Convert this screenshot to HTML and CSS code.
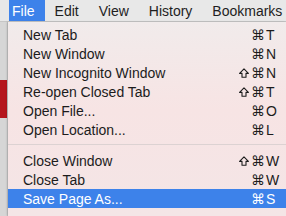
FILE: index.html
```html
<!DOCTYPE html>
<html>
<head>
    <title>File menu</title>
    <link rel="stylesheet" href="styles.css">
</head>
<body>
    <div class="menubar">
        <span class="menubar-item active">File</span>
        <span class="menubar-item">Edit</span>
        <span class="menubar-item">View</span>
        <span class="menubar-item">History</span>
        <span class="menubar-item">Bookmarks</span>
    </div>
    <div class="stage">
        <!-- sliver of the window behind the menu -->
        <div class="window-edge">
            <div class="window-red"></div>
        </div>
        <div class="menu">
            <div class="menu-item"><span>New Tab</span><span class="shortcut"><span class="cmd">⌘</span><span class="key">T</span></span></div>
            <div class="menu-item"><span>New Window</span><span class="shortcut"><span class="cmd">⌘</span><span class="key">N</span></span></div>
            <div class="menu-item"><span>New Incognito Window</span><span class="shortcut"><svg class="shift" viewBox="0 0 10 10"><path d="M5 0.9 L9.4 5.4 H7 V9.3 H3 V5.4 H0.6 Z"/></svg><span class="cmd">⌘</span><span class="key">N</span></span></div>
            <div class="menu-item"><span>Re-open Closed Tab</span><span class="shortcut"><svg class="shift" viewBox="0 0 10 10"><path d="M5 0.9 L9.4 5.4 H7 V9.3 H3 V5.4 H0.6 Z"/></svg><span class="cmd">⌘</span><span class="key">T</span></span></div>
            <div class="menu-item"><span>Open File...</span><span class="shortcut"><span class="cmd">⌘</span><span class="key">O</span></span></div>
            <div class="menu-item"><span>Open Location...</span><span class="shortcut"><span class="cmd">⌘</span><span class="key">L</span></span></div>
            <div class="menu-separator"></div>
            <div class="menu-item"><span>Close Window</span><span class="shortcut"><svg class="shift" viewBox="0 0 10 10"><path d="M5 0.9 L9.4 5.4 H7 V9.3 H3 V5.4 H0.6 Z"/></svg><span class="cmd">⌘</span><span class="key">W</span></span></div>
            <div class="menu-item"><span>Close Tab</span><span class="shortcut"><span class="cmd">⌘</span><span class="key">W</span></span></div>
            <div class="menu-item selected"><span>Save Page As...</span><span class="shortcut"><span class="cmd">⌘</span><span class="key">S</span></span></div>
        </div>
    </div>
</body>
</html>
```

FILE: styles.css
```css
body {
    margin: 0;
    padding: 0;
    width: 286px;
    height: 216px;
    overflow: hidden;
    font-family: 'Liberation Sans', Arial, sans-serif;
    font-size: 14px;
    color: #1c1c1c;
    background: #dcdcdc;
}

.menubar {
    height: 21px;
    display: flex;
    align-items: stretch;
    padding-left: 9px;
    background: #e8e8e8;
    border-bottom: 1px solid #c6c6c6;
}

.menubar-item {
    display: flex;
    align-items: center;
    padding: 0 10px;
    color: #1e1e1e;
}

.menubar-item.active {
    padding: 0 10px 0 3px;
    background: #3d82ea;
    color: #fff;
}

.stage {
    display: flex;
    height: 194px;
}

.window-edge {
    width: 7px;
    background: #d6d6d6;
    border-right: 1px solid #c4c4c4;
    padding-top: 58px;
}

.window-red {
    height: 38px;
    background: #b5161d;
}

.menu {
    flex: 1;
    padding-top: 3px;
    background: linear-gradient(#f1ebeb, #f7e4e4 45%, #f4e5e6 100%);
    box-shadow: -1px 0 2px rgba(0, 0, 0, 0.15);
}

.menu-item {
    height: 19px;
    display: flex;
    align-items: center;
    justify-content: space-between;
    padding-left: 15px;
}

.menu-item.selected {
    background: #3d82ea;
    color: #fff;
}

.shortcut {
    display: flex;
    align-items: center;
    font-family: 'DejaVu Sans', sans-serif;
}

.shortcut .shift {
    width: 10px;
    height: 10px;
    margin-right: 2px;
    fill: none;
    stroke: currentColor;
    stroke-width: 1.1;
    stroke-linejoin: round;
}

.shortcut .cmd {
    font-size: 14px;
    margin-right: 1px;
}

.shortcut .key {
    width: 20px;
    font-family: 'Liberation Sans', Arial, sans-serif;
    font-size: 14px;
}

.menu-separator {
    height: 1px;
    margin: 5px 0 6px;
    background: #dcd2d2;
}
```
